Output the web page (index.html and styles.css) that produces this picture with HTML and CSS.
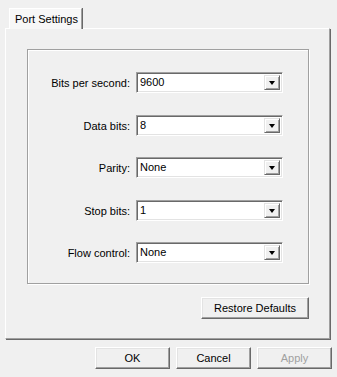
FILE: index.html
```html
<!DOCTYPE html>
<html>
<head>
<meta charset="utf-8">
<link rel="stylesheet" href="styles.css">
</head>
<body>
<div class="dialog">
  <div class="tabs"><div class="tab">Port Settings</div></div>
  <div class="panel">
    <div class="group">
      <div class="form">
        <div class="label">Bits per second:</div>
        <div class="combo"><span class="val">9600</span><span class="drop"><span class="arrow"></span></span></div>
        <div class="label">Data bits:</div>
        <div class="combo"><span class="val">8</span><span class="drop"><span class="arrow"></span></span></div>
        <div class="label">Parity:</div>
        <div class="combo"><span class="val">None</span><span class="drop"><span class="arrow"></span></span></div>
        <div class="label">Stop bits:</div>
        <div class="combo"><span class="val">1</span><span class="drop"><span class="arrow"></span></span></div>
        <div class="label">Flow control:</div>
        <div class="combo"><span class="val">None</span><span class="drop"><span class="arrow"></span></span></div>
      </div>
    </div>
    <div class="restore-row"><button class="btn restore">Restore Defaults</button></div>
  </div>
  <div class="actions">
    <button class="btn">OK</button>
    <button class="btn">Cancel</button>
    <button class="btn disabled">Apply</button>
  </div>
</div>
</body>
</html>
```
FILE: styles.css
```css
html, body {
  margin: 0;
  padding: 0;
  background: #f0f0f0;
}
body {
  width: 337px;
  height: 377px;
  overflow: hidden;
  font-family: "Liberation Sans", Arial, sans-serif;
  font-size: 11px;
  color: #000;
}
.dialog {
  padding-top: 8px;
}
.tabs {
  display: flex;
  padding-left: 9px;
  height: 20px;
}
.tab {
  box-sizing: border-box;
  width: 73px;
  height: 21px;
  background: #f7f7f7;
  border-left: 1px solid #fff;
  border-top: 1px solid #fff;
  border-right: 1px solid #a0a0a0;
  box-shadow: 1px 0 0 #696969;
  padding: 4px 0 0 5px;
  position: relative;
  z-index: 1;
}
.panel {
  box-sizing: border-box;
  margin-left: 5px;
  width: 325px;
  height: 311px;
  border-left: 1px solid #fff;
  border-top: 1px solid #fff;
  border-right: 1px solid #a0a0a0;
  border-bottom: 1px solid #a0a0a0;
  box-shadow: 1px 1px 0 #696969;
  padding: 20px 20px 0 21px;
}
.group {
  box-sizing: border-box;
  height: 235px;
  border: 1px solid #a0a0a0;
  box-shadow: inset 1px 1px 0 #fff, 1px 1px 0 #fff;
  padding: 22px 0 0 0;
}
.form {
  display: grid;
  grid-template-columns: 102px 147px;
  column-gap: 6px;
  row-gap: 21.5px;
  grid-auto-rows: 21px;
  align-items: center;
}
.label {
  text-align: right;
  padding-top: 1px;
}
.combo {
  box-sizing: border-box;
  height: 21px;
  display: flex;
  align-items: stretch;
  background: #fff;
  border-top: 1px solid #a0a0a0;
  border-left: 1px solid #a0a0a0;
  border-right: 1px solid #fff;
  border-bottom: 1px solid #fff;
  box-shadow: inset 1px 1px 0 #696969, inset -1px -1px 0 #e3e3e3;
  padding: 2px 2px 2px 2px;
}
.val {
  flex: 1;
  padding-left: 1px;
  line-height: 15px;
}
.drop {
  box-sizing: border-box;
  width: 16px;
  background: #f0f0f0;
  border-top: 1px solid #e3e3e3;
  border-left: 1px solid #e3e3e3;
  border-right: 1px solid #696969;
  border-bottom: 1px solid #696969;
  box-shadow: inset 1px 1px 0 #fff, inset -1px -1px 0 #a0a0a0;
  display: flex;
  align-items: center;
  justify-content: center;
}
.arrow {
  width: 0;
  height: 0;
  border-left: 3.5px solid transparent;
  border-right: 3.5px solid transparent;
  border-top: 4px solid #000;
  margin-top: 1px;
}
.restore-row {
  display: flex;
  justify-content: flex-end;
  padding-top: 13px;
}
.btn {
  box-sizing: border-box;
  font-family: "Liberation Sans", Arial, sans-serif;
  font-size: 11px;
  color: #000;
  background: #f0f0f0;
  height: 22px;
  width: 75px;
  border-top: 1px solid #fff;
  border-left: 1px solid #fff;
  border-right: 1px solid #696969;
  border-bottom: 1px solid #696969;
  box-shadow: inset -1px -1px 0 #a0a0a0, inset 1px 1px 0 #e3e3e3;
  padding: 0;
  margin: 0;
}
.restore {
  width: 108px;
}
.actions {
  display: flex;
  gap: 6px;
  padding-left: 95px;
  padding-top: 8px;
}
.disabled {
  color: #a0a0a0;
}
```
